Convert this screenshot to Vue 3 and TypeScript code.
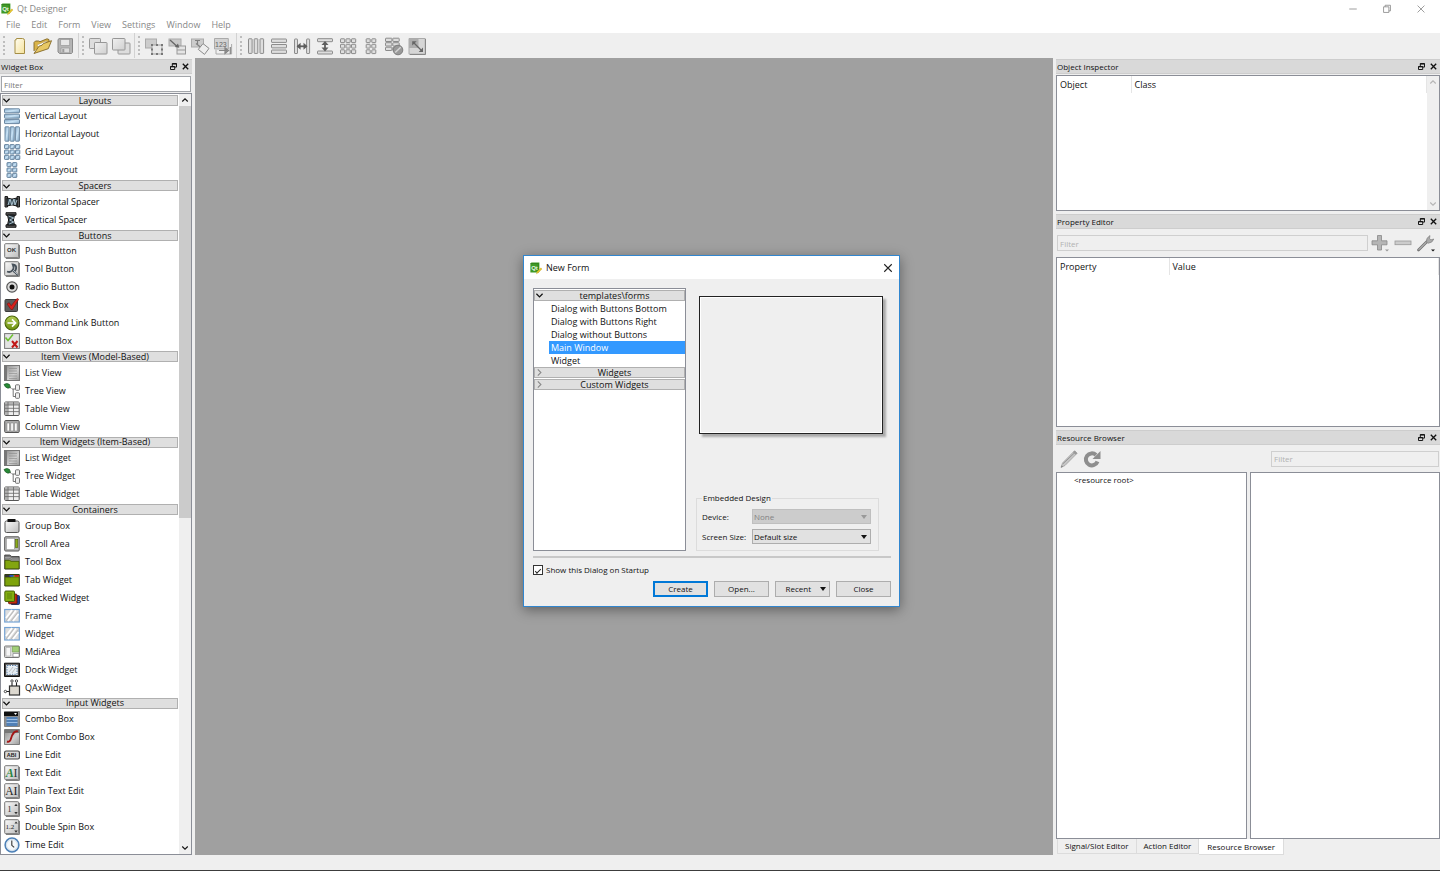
<script setup lang="ts">
import { ref } from 'vue'

interface WidgetGroup {
  title: string
  items: [icon: string, label: string][]
}

const menus = ['File', 'Edit', 'Form', 'View', 'Settings', 'Window', 'Help']

const toolbars: [icon: string, label: string][][] = [
  [['new', 'New'], ['open', 'Open'], ['save', 'Save']],
  [['back', 'Send to Back'], ['front', 'Bring to Front']],
  [['editWidgets', 'Edit Widgets'], ['editSignals', 'Edit Signals/Slots'], ['editBuddies', 'Edit Buddies'], ['editTabs', 'Edit Tab Order']],
  [
    ['tbCols', 'Lay Out Horizontally'], ['tbRows', 'Lay Out Vertically'], ['splitH', 'Horizontal Splitter'], ['splitV', 'Vertical Splitter'],
    ['tbGrid', 'Lay Out in a Grid'], ['tbForm', 'Lay Out in a Form'], ['breakLayout', 'Break Layout'], ['adjust', 'Adjust Size'],
  ],
]
const toolbarWidth = (count: number) => `${9 + Math.round((count * 70) / 3)}px`

const groups: WidgetGroup[] = [
  { title: 'Layouts', items: [['rows', 'Vertical Layout'], ['cols', 'Horizontal Layout'], ['grid', 'Grid Layout'], ['form', 'Form Layout']] },
  { title: 'Spacers', items: [['hspacer', 'Horizontal Spacer'], ['vspacer', 'Vertical Spacer']] },
  {
    title: 'Buttons',
    items: [['push', 'Push Button'], ['tool', 'Tool Button'], ['radio', 'Radio Button'], ['check', 'Check Box'], ['command', 'Command Link Button'], ['buttonBox', 'Button Box']],
  },
  { title: 'Item Views (Model-Based)', items: [['list', 'List View'], ['tree', 'Tree View'], ['table', 'Table View'], ['column', 'Column View']] },
  { title: 'Item Widgets (Item-Based)', items: [['list', 'List Widget'], ['tree', 'Tree Widget'], ['table', 'Table Widget']] },
  {
    title: 'Containers',
    items: [
      ['groupBox', 'Group Box'], ['scrollArea', 'Scroll Area'], ['toolBox', 'Tool Box'], ['tabWidget', 'Tab Widget'], ['stacked', 'Stacked Widget'],
      ['frame', 'Frame'], ['frame', 'Widget'], ['mdi', 'MdiArea'], ['dock', 'Dock Widget'], ['qax', 'QAxWidget'],
    ],
  },
  {
    title: 'Input Widgets',
    items: [
      ['combo', 'Combo Box'], ['fontCombo', 'Font Combo Box'], ['lineEdit', 'Line Edit'], ['textEdit', 'Text Edit'],
      ['plainText', 'Plain Text Edit'], ['spin', 'Spin Box'], ['doubleSpin', 'Double Spin Box'], ['time', 'Time Edit'],
    ],
  },
]

const rects = (xs: number[], ys: number[], w: number, h: number, attrs: string) =>
  ys.flatMap((y) => xs.map((x) => `<rect x="${x}" y="${y}" width="${w}" height="${h}" rx=".5" ${attrs}/>`)).join('')

const blue = 'fill="url(#g-blue)" stroke="#5f7d98" stroke-width=".9"'
const grey = 'fill="#dedede" stroke="#8c8c8c" stroke-width="1"'
const plate = '<rect x=".7" y=".7" width="14" height="14" rx="1" fill="url(#g-plate)" stroke="#777" stroke-width="1"/><path d="M15.4 2v13.4H2" fill="none" stroke="#555" stroke-width=".8"/>'
const serif = 'font-family="Liberation Serif, serif"'
const sans = 'font-family="Liberation Sans, sans-serif"'

const icons: Record<string, string> = {
  new: '<path d="M5.500.5h6a2 2 0 0 1 2 2v13H4V2z" fill="url(#g-page)" stroke="#a58e45" stroke-width="1"/><path d="M5.500.5V2H4z" fill="#fff" stroke="#b09a52" stroke-width=".6"/>',
  open: '<path d="M0 13V4.500L1.500 3h3L6 3.700 13 .8l2 .8V4" fill="#d9b347" stroke="#826827" stroke-width=".9"/><path d="M3 7l9.500-4 .5 1.600-8 5z" fill="#fff" stroke="#a89560" stroke-width=".5"/><path d="M0 15.500L5 8.200l3-1L9.500 5.500 17.500 2.700l-3.200 8z" fill="#e8c864" stroke="#826827" stroke-width=".9"/>',
  save: '<path d="M1 1.500L2 .7h13.500v13.800L14.500 15.500H2.600L1 14z" fill="#b5b5b5" stroke="#8b8b8b"/><rect x="3.700" y="1.500" width="9" height="6" fill="#e6e6e6" stroke="#999" stroke-width=".7"/><path d="M4 10h8.500v4.800H4z" fill="#dcdcdc" stroke="#999" stroke-width=".7"/><path d="M5.300 11h2v3.400h-2z" fill="#9b9b9b"/>',
  back: '<rect x="-.5" y=".5" width="11" height="10" rx=".7" fill="#ddd" stroke="#999"/><rect x="4.500" y="4.500" width="12.500" height="11.500" rx=".7" fill="url(#g-soft)" stroke="#969696"/>',
  front: '<rect x="5" y="5" width="12" height="11" rx=".7" fill="#ddd" stroke="#999"/><rect x="-.5" y=".5" width="12.500" height="11.500" rx=".7" fill="url(#g-soft)" stroke="#969696"/>',
  editWidgets: '<rect x="-.5" y="1" width="11" height="9" fill="#ccc" stroke="#aaa"/><rect x="6" y="7" width="10" height="9" fill="#e8e8e8" stroke="#a2a2a2"/><path d="M5 6h2v2H5zm5 0h2v2h-2zm5 0h2v2h-2zM5 10.500h2v2H5zm10 0h2v2h-2zM5 15h2v2H5zm5 0h2v2h-2zm5 0h2v2h-2z" fill="#777"/>',
  editSignals: '<rect x="0" y="1" width="12" height="7" fill="#c9c9c9" stroke="#aaa"/><rect x="8" y="8" width="8.500" height="8" fill="#e4e4e4" stroke="#999"/><path d="M8 12h8" stroke="#999"/><path d="M1 2l7.200 6.400" stroke="#666" stroke-width="1.300"/><path d="M10.300 9.800L5.800 8.900 9 5.500z" fill="#666"/>',
  editBuddies: '<rect x="-.5" y="1" width="12" height="8" fill="#ccc" stroke="#aaa"/><path d="M3 2.500h5M5.500 2.500V7M4 5.500l5 4" stroke="#808080" stroke-width="1.200" fill="none"/><path d="M11 5.600l6 4.800-4.500 6-6.200-5z" fill="#eee" stroke="#8a8a8a"/>',
  editTabs: '<path d="M-.5 .5h13.800V11H-.5z" fill="#d3d3d3" stroke="#aaa"/><path d="M1 12v4h15.600V6" fill="none" stroke="#aaa"/><text x="0" y="9" font-size="7" fill="#666" ' + sans + '>123</text><path d="M4 12.500h8M10 9.800l3.500 2.700-3.500 3zM15.300 9v7" fill="#999" stroke="#858585" stroke-width="1.200"/>',
  tbCols: rects([0.5, 6.2, 12], [0.8], 3.6, 14.6, grey),
  tbRows: rects([0.5], [1, 6.5, 12], 15, 3.4, grey),
  splitH: rects([0.5, 12.6], [1], 3, 14.5, grey) + '<path d="M3.500 8.300h9" stroke="#5e5e5e" stroke-width="1.800"/><path d="M2.600 8.300l4-3.500v7zM13.500 8.300l-4-3.500v7z" fill="#5e5e5e"/>',
  splitV: rects([0.5], [0.7, 13], 15, 3, grey) + '<path d="M8 4v8" stroke="#5e5e5e" stroke-width="1.800"/><path d="M8 3l-3.500 4h7zM8 13.600L4.500 9.600h7z" fill="#5e5e5e"/>',
  tbGrid: rects([0.5, 6, 11.5], [0.8, 6.3, 11.8], 4.2, 3.8, grey),
  tbForm: rects([3.2, 8.8], [0.8, 6.3, 11.8], 4, 3.8, grey),
  breakLayout: rects([-0.5, 6.8], [0.2, 4.7, 9.2], 6.4, 3.3, grey) + '<circle cx="12" cy="12" r="4.800" fill="#999" stroke="#7d7d7d"/><path d="M9.200 14.500l5.500-5.200" stroke="#d4d4d4" stroke-width="1.500"/>',
  adjust: '<path d="M0 .5h16.200v15.700H0z" fill="#d6d6d6" stroke="#aaa"/><path d="M0 .5h9.500V10H0z" fill="#adadad"/><path d="M16.500 1v15.500H1" fill="none" stroke="#888"/><path d="M5 5l7 7" stroke="#666" stroke-width="1.200"/><path d="M3.200 3.200h4.500L3.200 7.500zM14 14H9.700L14 9.600z" fill="#666"/>',

  rows: rects([0.5], [0.8, 6.2, 11.6], 15, 4, blue),
  cols: rects([1, 6.2, 11.4], [0.8], 4, 14.4, blue),
  grid: rects([0.5, 6, 11.5], [0.6, 6, 11.4], 4.3, 4, blue),
  form: rects([3, 8.6], [0.6, 6, 11.4], 4.2, 4, blue),
  hspacer: '<path d="M1 2.500h2.500V13H1zM13 2.500h2.500V13H13z" fill="#555" stroke="#1d1d1d"/><path d="M3 4q5 2.200 10 0v8q-5-2.200-10 0z" fill="#40545f" stroke="#111"/><path d="M4 11l2-6 1.800 6L10 5l1 6 2-5" fill="none" stroke="#b6ccd8" stroke-width=".9"/>',
  vspacer: '<path d="M2 .7h10v2.500H2zM2 12.800h10v2.500H2z" fill="#555" stroke="#1d1d1d"/><path d="M3.500 3q2.200 5 0 10h7q-2.200-5 0-10z" fill="#2c3a42" stroke="#111"/><path d="M4.500 4l5.200 2-4 2 4 2-4.500 2" fill="none" stroke="#b6ccd8" stroke-width=".9"/>',
  push: plate + '<text x="7.600" y="9" font-size="6" font-weight="bold" text-anchor="middle" fill="#333" ' + sans + '>OK</text>',
  tool: plate + '<path d="M14 14.500L8.500 8.700M3 10.500q3.500 1.500 5.500-1.200T8.800 3.500q3.400.3 3.400 3.200T9.300 11" fill="none" stroke="#48525c" stroke-width="1.800"/><path d="M13.500 13.500L9 9" stroke="#c5ced6" stroke-width=".8"/>',
  radio: '<circle cx="8" cy="8" r="5.200" fill="#ddd" stroke="#555" stroke-width="1.200"/><circle cx="8" cy="8" r="2.500" fill="#111"/>',
  check: '<rect x="1" y="2.500" width="12.500" height="12" rx="1" fill="#5d5d5d" stroke="#3c3c3c"/><path d="M3 7l2.200-1.300 2 3L13 1.500l1.700.8-6.200 10.200H7z" fill="#d8211c" stroke="#7e0f0c" stroke-width=".6"/>',
  command: '<circle cx="8" cy="8" r="7" fill="url(#g-green)" stroke="#4a6608" stroke-width="1.100"/><path d="M3.500 8h7.500M8 4.300L11.600 8 8 11.700" fill="none" stroke="#fff" stroke-width="1.700"/>',
  buttonBox: '<rect x=".6" y=".6" width="14.800" height="14.800" fill="#e3e3e3" stroke="#777"/><path d="M1.500 4.500L4 7.500l5-6" fill="none" stroke="#6cc030" stroke-width="1.500"/><path d="M8 8l5.500 6.500M13.500 8L8 14.500" stroke="#c01818" stroke-width="2"/>',
  list: '<rect x=".5" y=".5" width="15" height="15" fill="url(#g-list)" stroke="#777"/><path d="M.5.500H3v15H.5z" fill="#777"/><path d="M5 3.500h8M5 6h8M5 8.500h8M5 11h8M5 13.500h8" stroke="#888" stroke-width=".6"/>',
  tree: '<path d="M0 1.500q3-2 5.500 0l1 3q-3 1.500-5-.5z" fill="#278a35" stroke="#175421" stroke-width=".7"/><path d="M5.500 4l2 1.500M8 6h3.500M9.200 6v7.500h2.500" fill="none" stroke="#666" stroke-width=".9"/><rect x="11.500" y="1.800" width="4" height="5.500" rx=".8" fill="#eee" stroke="#666" stroke-width=".9"/><rect x="11.500" y="9.800" width="4" height="5.500" rx=".8" fill="#eee" stroke="#666" stroke-width=".9"/>',
  table: '<rect x=".7" y="1" width="14.500" height="13.500" rx="1" fill="#eee" stroke="#555"/><path d="M1 1.300h14v2.500H1zM1 1h2.500v13H1z" fill="#b2b2b2"/><path d="M1 4h14M1 7.300h14M1 10.600h14M4 1v13M9.500 1v13" stroke="#666" stroke-width=".8"/>',
  column: '<rect x=".7" y="1.500" width="14.500" height="12" rx="1" fill="#aaa" stroke="#555"/><path d="M3 4h2.500v8H3zM6.800 4h2.500v8H6.800zM10.600 4h2.500v8h-2.500z" fill="#fff" stroke="#777" stroke-width=".5"/>',
  groupBox: '<rect x="1" y="3" width="14" height="11.500" rx="1.500" fill="url(#g-plate)" stroke="#555"/><path d="M3.500 1h8v3h-8z" fill="#111"/>',
  scrollArea: '<rect x=".7" y=".8" width="14.500" height="14.200" rx="1" fill="#bbb" stroke="#555"/><rect x="2.500" y="2.500" width="7.800" height="11" fill="#fff" stroke="#888" stroke-width=".5"/><rect x="11.600" y="3.500" width="2.200" height="8" fill="#8cab19" stroke="#4c6400" stroke-width=".6"/>',
  toolBox: '<path d="M.7 1h5l2 1.500h7.500V15H.7z" fill="#777" stroke="#333" stroke-width=".8"/><path d="M1 3.500h5L8 5h7M1 5h4l2 1.300h8" fill="none" stroke="#bbb" stroke-width=".6"/><path d="M1 6.300h4.500l1.500 1h8v7.500H1z" fill="#83a610" stroke="#435900" stroke-width=".8"/>',
  tabWidget: '<path d="M.8 2.500h14.500V14H.8z" fill="#7da30b" stroke="#31420a"/><path d="M1 2.700h6v2.600H1z" fill="#333"/><path d="M5.500 3h4v1.800h-4z" fill="#2452bc"/><path d="M10.500 3h4.500v1.800h-4.500z" fill="#c42020"/><path d="M1 5.600h14" stroke="#536e04" stroke-width=".6"/>',
  stacked: '<rect x="7" y="5.500" width="8.500" height="9" rx="1" fill="#1d3f9e" stroke="#101f52" stroke-width=".8"/><rect x="4.500" y="4" width="8.500" height="9.800" rx="1" fill="#c12a11" stroke="#591003" stroke-width=".8"/><rect x=".8" y="1" width="9.700" height="10.500" rx="1" fill="#83ad11" stroke="#3d5600" stroke-width=".9"/><path d="M3 4h5M3 6h5M3 8h5" stroke="#4f7005" stroke-width=".7"/>',
  frame: '<rect x=".7" y="1.500" width="14.600" height="12.500" fill="#dedede" stroke="#75a3d4" stroke-width="1.200"/><path d="M2 10l6-8M4 13l8-10.500M9 13l5.500-7" stroke="#fff" stroke-width="1.800"/><path d="M2 13l8-10.500M7 13l7.500-9.500" stroke="#bbb" stroke-width="1.200"/>',
  mdi: '<rect x=".6" y="2" width="14.800" height="11.500" rx=".8" fill="#ddd" stroke="#777"/><path d="M2 3.500h4.500V12H2z" fill="#f6f6f6" stroke="#999" stroke-width=".5"/><path d="M8.300 2.500H15V8H8.300z" fill="#a2ce78" stroke="#6b9349" stroke-width=".6"/><path d="M9 9.500h6V13H9z" fill="#fff" stroke="#777" stroke-width=".6"/>',
  dock: '<path d="M.5 1.200h15v13.300H.5z" fill="#444" stroke="#111"/><rect x="3" y="3.500" width="10" height="8.800" fill="#e4edf4" stroke="#fff" stroke-width="1.500"/><rect x="3" y="3.500" width="10" height="8.800" fill="none" stroke="#557da8" stroke-width="1" stroke-dasharray="1.500 1"/><path d="M5 10l4-5M8 11l3.500-5" stroke="#c0c0c0"/>',
  qax: '<rect x="5.500" y="6" width="10" height="9" fill="#ddd9d0" stroke="#333" stroke-width="1.200"/><path d="M8 6V2.500M12.500 6V2.500M5.500 11.500H2" stroke="#222" stroke-width="1.100"/><circle cx="8" cy="1" r="1.200" fill="#fff" stroke="#222" stroke-width=".8"/><circle cx="12.500" cy="1" r="1.200" fill="#fff" stroke="#222" stroke-width=".8"/><circle cx="1.400" cy="11.500" r="1.200" fill="#fff" stroke="#222" stroke-width=".8"/>',
  combo: '<path d="M.5.500h15v15H.5z" fill="#8e8e8e" stroke="#666" stroke-width=".7"/><path d="M0 1h14v4H0z" fill="#111"/><path d="M10 2h3l-1.500 2z" fill="#fff"/><path d="M2.500 6h11v9h-11z" fill="#5180b6"/><path d="M2.500 8.500h11M2.500 11.500h11" stroke="#a4c5ea" stroke-width=".9"/>',
  fontCombo: '<path d="M.5.500h15v15H.5z" fill="url(#g-list)" stroke="#666" stroke-width=".8"/><path d="M1 1h14v3H1z" fill="#777"/><path d="M3 12.500q3 1 4-3t3-6 4-1" fill="none" stroke="#a31515" stroke-width="1.900"/>',
  lineEdit: '<rect x=".6" y="4" width="14.800" height="8" rx="1.500" fill="#d8d8d8" stroke="#444" stroke-width="1.200"/><text x="7.500" y="10.200" font-size="5.500" font-weight="bold" text-anchor="middle" fill="#222" ' + sans + '>ABI</text>',
  textEdit: plate + '<text x="1.800" y="12" font-size="12" font-style="italic" font-weight="bold" fill="#29853f" ' + serif + '>A</text><text x="9.500" y="12" font-size="12" fill="#333" ' + serif + '>I</text>',
  plainText: plate + '<text x="1.300" y="12" font-size="11.500" fill="#222" ' + serif + '>A</text><text x="9.500" y="12" font-size="12" fill="#222" ' + serif + '>I</text>',
  spin: plate + '<text x="3.600" y="10.500" font-size="8" fill="#222" ' + serif + '>1</text><path d="M10.300 5L12 2.800 13.700 5zM10.300 11l1.700 2.200 1.700-2.200z" fill="#333"/>',
  doubleSpin: plate + '<text x="1.500" y="10" font-size="7" fill="#222" ' + serif + '>1.2</text><path d="M10.500 4.500L12 2.500l1.700 2zM10.300 11.500l1.700 2.200 1.700-2.200z" fill="#333"/>',
  time: '<circle cx="8" cy="8" r="6.900" fill="#f4f8fb" stroke="#4d80b7" stroke-width="1.500"/><circle cx="8" cy="8" r="5.500" fill="none" stroke="#c2d3e2" stroke-width=".7"/><path d="M7.800 3.500V8.300l2.400 2" fill="none" stroke="#333" stroke-width="1.100"/>',

  qt: '<path d="M.5 2L2 .5h10.500v12L11 14H.5z" fill="#3f9a26"/><path d="M.5 2H11v12" fill="none" stroke="#2e751a" stroke-width=".8"/><text x="1.500" y="10.500" font-size="8" font-weight="bold" fill="#e9f6e4" ' + sans + '>Qt</text><path d="M8.500 15.800l1-3 5-5 1.500 1.600-5 5z" fill="#eac62b" stroke="#b79a21" stroke-width=".4"/>',
  float: '<path d="M5.500 2.500h7v6h-7zM5 3.500h8" fill="none" stroke="#111" stroke-width="1.600"/><path d="M2.500 7.500h7v5h-7z" fill="#e0e0e0" stroke="#111" stroke-width="1.600"/><path d="M2.500 8h7" stroke="#111" stroke-width="1.800"/>',
  cross: '<path d="M3 3l9 9M12 3l-9 9" stroke="#111" stroke-width="2.200"/>',
  minimize: '<path d="M2 8h12" stroke="#888" stroke-width="1.300"/>',
  restore: '<path d="M2.500 4.500h8.500v9H2.500zM5 4.500V2h8.500v9H11" fill="none" stroke="#888" stroke-width="1.300"/>',
  close: '<path d="M2.500 2.500l11 11M13.500 2.500l-11 11" stroke="#888" stroke-width="1.300"/>',
  closeDark: '<path d="M2 2l12 12M14 2L2 14" stroke="#222" stroke-width="1.700"/>',
  down: '<path d="M2.500 5l5.500 5.500L13.500 5" fill="none" stroke="currentColor" stroke-width="2.200"/>',
  up: '<path d="M2.500 11L8 5.500l5.500 5.500" fill="none" stroke="currentColor" stroke-width="2.200"/>',
  right: '<path d="M5 2.500L10.500 8 5 13.500" fill="none" stroke="currentColor" stroke-width="1.900"/>',
  plus: '<path d="M5.500.500h4v5.300H15v4H9.500V15h-4V9.800H0v-4h5.500z" fill="#b5b5b5" stroke="#888" stroke-width=".8"/><path d="M13 14.500h4L15 16.500z" fill="#999"/>',
  minus: '<rect x="0" y="6" width="16" height="3.700" fill="#ccc" stroke="#999" stroke-width=".8"/>',
  wrench: '<path d="M.5 15L9 6.500" stroke="#777" stroke-width="2.800" stroke-linecap="round"/><path d="M1 14.500L9 6.500" stroke="#d2d2d2" stroke-width="1" stroke-linecap="round"/><path d="M8.500 7.500Q7.500 3 12 .5L11.500 3.500 13 4.800 15.800 4Q14.500 8 10.300 8.200z" fill="#aaa" stroke="#777" stroke-width=".6"/><path d="M13 14.500h4L15 16.500z" fill="#111"/>',
  pencil: '<path d="M0 16.500l1.500-4.500L13.500-.2 16.200 2.200 4 14.500z" fill="#c5c5c5" stroke="#999" stroke-width=".7"/><path d="M2 12.700L14.700.8" stroke="#888" stroke-width=".8"/><path d="M13.500-.2L16.200 2.200l-1.500 1.500L12 1.300z" fill="#999"/><path d="M0 16.500l.7-2 1.300 1z" fill="#777"/>',
  reload: '<path d="M13.500 10.500A6 6 0 1 1 12 4" fill="none" stroke="#8e8e8e" stroke-width="4"/><path d="M16.500 0v8H8.500z" fill="#8e8e8e"/>',
}

const forms = ['Dialog with Buttons Bottom', 'Dialog with Buttons Right', 'Dialog without Buttons', 'Main Window', 'Widget']
const selectedForm = ref('Main Window')
const showOnStartup = ref(true)
const screenSize = ref('Default size')
const tabs = ['Signal/Slot Editor', 'Action Editor', 'Resource Browser']
const activeTab = ref('Resource Browser')
</script>

<template>
  <div class="window">
    <svg class="defs" aria-hidden="true">
      <defs>
        <linearGradient id="g-blue" x1="0" y1="0" x2="1" y2="1"><stop offset="0" stop-color="#86a9c6" /><stop offset=".5" stop-color="#c8e2f5" /><stop offset="1" stop-color="#7fa3c1" /></linearGradient>
        <linearGradient id="g-plate" x1="0" y1="0" x2="1" y2="1"><stop offset="0" stop-color="#fafafa" /><stop offset="1" stop-color="#bcbcbc" /></linearGradient>
        <linearGradient id="g-soft" x1="0" y1="0" x2="1" y2="1"><stop offset="0" stop-color="#f0f0f0" /><stop offset="1" stop-color="#d0d0d0" /></linearGradient>
        <linearGradient id="g-page" x1="0" y1="0" x2="1" y2="1"><stop offset="0" stop-color="#fffdf2" /><stop offset="1" stop-color="#f5e29b" /></linearGradient>
        <linearGradient id="g-list" x1="0" y1="0" x2="1" y2="1"><stop offset="0" stop-color="#8c8c8c" /><stop offset=".6" stop-color="#cfcfcf" /><stop offset="1" stop-color="#999" /></linearGradient>
        <linearGradient id="g-green" x1="0" y1="0" x2="0" y2="1"><stop offset="0" stop-color="#b3cc55" /><stop offset="1" stop-color="#6b8f0e" /></linearGradient>
      </defs>
    </svg>

    <header class="titlebar">
      <svg class="ico-title" viewBox="0 0 16 16" v-html="icons.qt" />
      <span class="title">Qt Designer</span>
      <div class="controls">
        <button v-for="name in ['minimize', 'restore', 'close']" :key="name" :aria-label="name">
          <svg viewBox="0 0 16 16" v-html="icons[name]" />
        </button>
      </div>
    </header>
    <nav class="menubar">
      <button v-for="m in menus" :key="m">{{ m }}</button>
    </nav>
    <div class="toolbars">
      <div v-for="(bar, i) in toolbars" :key="i" class="toolbar" role="toolbar" :style="{ width: toolbarWidth(bar.length) }">
        <button v-for="[icon, label] in bar" :key="icon" :aria-label="label" :disabled="i > 0 || icon === 'save'">
          <svg viewBox="-1 -1 18 18" v-html="icons[icon]" />
        </button>
      </div>
    </div>

    <main class="workspace">
      <aside class="dock widget-box">
        <div class="dock-title">
          <h2>Widget Box</h2>
          <button aria-label="Float"><svg viewBox="0 0 15 15" v-html="icons.float" /></button>
          <button aria-label="Close panel"><svg viewBox="0 0 15 15" v-html="icons.cross" /></button>
        </div>
        <input class="filter" type="text" placeholder="Filter" aria-label="Filter widgets" />
        <div class="tree-frame">
          <div class="tree">
            <template v-for="g in groups" :key="g.title">
              <button class="group-head"><svg viewBox="0 0 16 16" v-html="icons.down" /><span>{{ g.title }}</span></button>
              <div v-for="[icon, label] in g.items" :key="label" class="tree-item">
                <svg viewBox="0 0 16 16" v-html="icons[icon]" /><span>{{ label }}</span>
              </div>
            </template>
          </div>
          <div class="scrollbar">
            <button aria-label="Scroll up"><svg viewBox="0 0 16 16" v-html="icons.up" /></button>
            <div class="track"><div class="thumb"></div></div>
            <button aria-label="Scroll down"><svg viewBox="0 0 16 16" v-html="icons.down" /></button>
          </div>
        </div>
      </aside>

      <section class="canvas" aria-label="Form area"></section>

      <aside class="right">
        <section class="dock">
          <div class="dock-title">
            <h2>Object Inspector</h2>
            <button aria-label="Float"><svg viewBox="0 0 15 15" v-html="icons.float" /></button>
            <button aria-label="Close panel"><svg viewBox="0 0 15 15" v-html="icons.cross" /></button>
          </div>
          <div class="pane inspector">
            <table>
              <thead><tr><th class="c-object">Object</th><th>Class</th></tr></thead>
            </table>
            <div class="scrollbar idle">
              <button aria-label="Scroll up" disabled><svg viewBox="0 0 16 16" v-html="icons.up" /></button>
              <div class="track"></div>
              <button aria-label="Scroll down" disabled><svg viewBox="0 0 16 16" v-html="icons.down" /></button>
            </div>
          </div>
        </section>

        <section class="dock">
          <div class="dock-title">
            <h2>Property Editor</h2>
            <button aria-label="Float"><svg viewBox="0 0 15 15" v-html="icons.float" /></button>
            <button aria-label="Close panel"><svg viewBox="0 0 15 15" v-html="icons.cross" /></button>
          </div>
          <div class="panel-tools">
            <input class="off" type="text" placeholder="Filter" aria-label="Filter properties" disabled />
            <button aria-label="Add property" disabled><svg viewBox="-1 -1 18 18" v-html="icons.plus" /></button>
            <button aria-label="Remove property" disabled><svg viewBox="-1 -1 18 18" v-html="icons.minus" /></button>
            <button aria-label="Configure"><svg viewBox="-1 -1 18 18" v-html="icons.wrench" /></button>
          </div>
          <div class="pane">
            <table>
              <thead><tr><th class="c-property">Property</th><th>Value</th></tr></thead>
            </table>
          </div>
        </section>

        <section class="dock">
          <div class="dock-title">
            <h2>Resource Browser</h2>
            <button aria-label="Float"><svg viewBox="0 0 15 15" v-html="icons.float" /></button>
            <button aria-label="Close panel"><svg viewBox="0 0 15 15" v-html="icons.cross" /></button>
          </div>
          <div class="panel-tools resource-tools">
            <button aria-label="Edit resources" disabled><svg viewBox="-1 -1 18 18" v-html="icons.pencil" /></button>
            <button aria-label="Reload" disabled><svg viewBox="-1 -1 18 18" v-html="icons.reload" /></button>
            <input class="off" type="text" placeholder="Filter" aria-label="Filter resources" disabled />
          </div>
          <div class="split">
            <div class="pane"><div class="resource-root">&lt;resource root&gt;</div></div>
            <div class="pane"></div>
          </div>
          <div class="tabs" role="tablist">
            <button v-for="t in tabs" :key="t" role="tab" :aria-selected="t === activeTab" :class="{ active: t === activeTab }" @click="activeTab = t">{{ t }}</button>
          </div>
        </section>
      </aside>
    </main>
    <footer class="statusbar"></footer>

    <div class="dialog" role="dialog" aria-label="New Form">
      <div class="dialog-title">
        <svg class="ico-title" viewBox="0 0 16 16" v-html="icons.qt" />
        <span class="title">New Form</span>
        <button aria-label="Close dialog"><svg viewBox="0 0 16 16" v-html="icons.closeDark" /></button>
      </div>
      <div class="dialog-body">
        <div class="choices">
          <div class="templates">
            <button class="group-head"><svg viewBox="0 0 16 16" v-html="icons.down" /><span>templates\forms</span></button>
            <button v-for="f in forms" :key="f" class="template" :class="{ selected: f === selectedForm }" @click="selectedForm = f">{{ f }}</button>
            <button class="group-head folded"><svg viewBox="0 0 16 16" v-html="icons.right" /><span>Widgets</span></button>
            <button class="group-head folded"><svg viewBox="0 0 16 16" v-html="icons.right" /><span>Custom Widgets</span></button>
          </div>
          <div class="side">
            <div class="preview"></div>
            <fieldset>
              <legend>Embedded Design</legend>
              <label for="device">Device:</label>
              <div class="select"><select id="device" disabled><option>None</option></select></div>
              <label for="screen">Screen Size:</label>
              <div class="select"><select id="screen" v-model="screenSize"><option>Default size</option></select></div>
            </fieldset>
          </div>
        </div>
        <hr />
        <label class="startup"><input v-model="showOnStartup" type="checkbox" />Show this Dialog on Startup</label>
        <div class="actions">
          <button class="default">Create</button>
          <button>Open...</button>
          <button class="with-menu">Recent</button>
          <button>Close</button>
        </div>
      </div>
    </div>
  </div>
</template>

<style>
body {
  margin: 0;
}
</style>

<style scoped>
.window {
  position: relative;
  display: flex;
  flex-direction: column;
  box-sizing: border-box;
  min-height: 100vh;
  background: #efefef;
  border-bottom: 1px solid #3c3c3c;
  color: #111;
  font: 9px/12px 'Open Sans', 'Noto Sans', sans-serif;
}
.window *,
.window *::before,
.window *::after {
  box-sizing: border-box;
}
.defs {
  position: absolute;
  width: 0;
  height: 0;
}
button {
  display: flex;
  align-items: center;
  justify-content: center;
  padding: 0;
  border: 0;
  background: none;
  color: inherit;
  font: inherit;
  white-space: nowrap;
}
input,
select {
  color: inherit;
  font: inherit;
}
svg {
  display: block;
  flex: none;
  overflow: visible;
}
.dock-title,
.filter,
.panel-tools,
.resource-root,
.tabs,
fieldset,
.startup,
.actions {
  font-size: 8px;
}

.titlebar {
  display: flex;
  align-items: center;
  height: 17px;
  background: #fff;
  color: #888;
}
.ico-title {
  width: 12px;
  height: 12px;
}
.titlebar .ico-title {
  margin-left: 1px;
}
.title {
  flex: 1;
  margin-left: 4px;
}
.controls {
  display: flex;
  margin-right: 2px;
}
.controls button {
  width: 34px;
  height: 15px;
}
.controls button svg {
  width: 10px;
  height: 10px;
}
.menubar {
  display: flex;
  gap: 11px;
  height: 16px;
  padding-left: 6px;
  background: #fff;
  color: #888;
}
.toolbars {
  display: flex;
  height: 25px;
}
.toolbar {
  display: flex;
  padding: 1px 1px 1px 3px;
  border-right: 1px solid #d2d2d2;
}
.toolbar:last-child {
  padding-right: 4px;
  border-right: 0;
}
.toolbar::before {
  content: '';
  width: 4px;
  margin: 2px 0;
  border-left: 2px dotted #bdbdbd;
}
.toolbar button {
  flex: 1;
}
.toolbar svg {
  width: 18px;
  height: 18px;
}

.workspace {
  display: grid;
  flex: 1;
  grid-template-columns: 192px minmax(0, 1fr) 384px;
  gap: 3px;
}
.canvas {
  background: #a0a0a0;
}
.dock {
  display: flex;
  flex-direction: column;
  min-height: 0;
}
.dock-title {
  display: flex;
  flex: none;
  align-items: center;
  height: 15px;
  padding-right: 1px;
  background: #d9d9d9;
  border: 1px solid #cdcdcd;
  border-width: 1px 0;
}
.dock-title h2 {
  flex: 1;
  margin: 0 0 0 1px;
  font: inherit;
}
.dock-title button {
  width: 12px;
  height: 12px;
}
.dock-title svg {
  width: 9px;
  height: 9px;
}
.widget-box {
  padding-top: 1px;
}
.filter {
  height: 16px;
  margin: 2px 1px 1px;
  padding: 0 2px;
  border: 1px solid #a2a5aa;
  background: #fff;
}
input::placeholder {
  color: #777;
  opacity: 1;
}
.tree-frame {
  display: flex;
  flex: 1;
  border: 1px solid #8b8e97;
  background: #fff;
}
.tree {
  display: flex;
  flex: 1;
  flex-direction: column;
}
.group-head {
  position: relative;
  margin: 0 1px;
}
.tree .group-head {
  flex: 1 0 13px;
  max-height: 14px;
  background: linear-gradient(#dfdfdf, #dfdfdf) 1px 2px / calc(100% - 2px) 9px no-repeat, linear-gradient(#b0b0b0, #b0b0b0) 0 1px / 100% 11px no-repeat;
}
.group-head span {
  flex: 1;
  padding-left: 10px;
}
.group-head svg {
  position: absolute;
  left: 0;
  width: 9px;
  height: 9px;
}
.tree-item {
  display: flex;
  flex: none;
  align-items: center;
  gap: 5px;
  height: 18px;
  padding-left: 3px;
}
.tree-item svg {
  width: 16px;
  height: 16px;
}
.scrollbar {
  display: flex;
  flex: none;
  flex-direction: column;
  width: 12px;
  background: #efefef;
}
.scrollbar button {
  height: 12px;
}
.scrollbar svg {
  width: 8px;
  height: 8px;
}
.scrollbar .track {
  flex: 1;
}
.thumb {
  height: 56%;
  background: #cbcbcb;
}
.scrollbar.idle {
  color: #b4b4b4;
}

.right {
  display: grid;
  grid-template-rows: minmax(0, 152fr) minmax(0, 213fr) minmax(0, 425fr);
  gap: 3px;
  padding-top: 1px;
}
.pane {
  flex: 1;
  min-width: 0;
  border: 1px solid #8b8e97;
  background: #fff;
}
.inspector {
  display: flex;
  margin-top: 1px;
}
table {
  width: 100%;
  border-collapse: collapse;
}
.inspector table {
  flex: 1;
  align-self: flex-start;
}
th {
  height: 17px;
  padding: 0 3px;
  border-right: 1px solid #e5e5e5;
  font-weight: normal;
  text-align: left;
}
.c-object {
  width: 74px;
}
.c-property {
  width: 112px;
}
.panel-tools {
  display: flex;
  flex: none;
  align-items: center;
  height: 28px;
  padding: 0 3px 0 1px;
}
.panel-tools .off {
  flex: 1;
  height: 16px;
  padding: 0 2px;
  border: 1px solid #cfcfcf;
  background: #efefef;
}
.off::placeholder {
  color: #b2b2b2;
}
.panel-tools button {
  width: 23px;
  height: 23px;
}
.panel-tools svg {
  width: 18px;
  height: 18px;
}
.panel-tools.resource-tools {
  height: 27px;
  padding: 0 1px;
}
.resource-tools .off {
  flex: 0 0 168px;
  margin-left: auto;
}
.split {
  display: flex;
  flex: 1;
  gap: 3px;
}
.resource-root {
  padding: 1px 0 0 17px;
}
.tabs {
  display: flex;
  flex: none;
  align-items: flex-start;
  height: 16px;
  padding-left: 1px;
}
.tabs button {
  height: 15px;
  padding: 0 7px;
  border: 1px solid #dcdcdc;
  border-top: 0;
}
.tabs button + button {
  border-left: 0;
}
.tabs button.active {
  height: 16px;
  padding: 0 8px;
  background: #fff;
}
.statusbar {
  height: 15px;
}

.dialog {
  position: absolute;
  top: 255px;
  left: 523px;
  display: flex;
  flex-direction: column;
  width: 377px;
  border: 1px solid #3186cf;
  background: #efefef;
  box-shadow: 0 3px 12px rgba(0, 0, 0, 0.4);
}
.dialog-title {
  display: flex;
  align-items: center;
  height: 23px;
  padding: 0 5px 0 6px;
  background: #fff;
}
.dialog-title button {
  width: 12px;
  height: 12px;
}
.dialog-title button svg {
  width: 10px;
  height: 10px;
}
.dialog-body {
  padding: 9px 8px 9px 9px;
}
.choices {
  display: flex;
  gap: 10px;
}
.templates {
  width: 153px;
  height: 263px;
  border: 1px solid #8b8e97;
  background: #fff;
}
.templates .group-head {
  width: 151px;
  height: 11px;
  margin: 0 0 1px;
  border: 1px solid #b0b0b0;
  background: #dfdfdf;
}
.templates .group-head:first-child {
  margin-top: 1px;
}
.folded svg {
  color: #888;
}
.template {
  justify-content: flex-start;
  width: 136px;
  height: 13px;
  margin-left: 15px;
  padding-left: 2px;
}
.template.selected {
  background: #3399ff;
  color: #fff;
}
.side {
  display: flex;
  flex: 1;
  flex-direction: column;
  justify-content: space-between;
}
.preview {
  width: 184px;
  height: 138px;
  margin: 8px 0 0 3px;
  border: 1px solid #222;
  box-shadow: inset 0 0 0 1px #fff, 3px 3px 2px #aaa;
}
fieldset {
  display: grid;
  grid-template-columns: 50px 119px;
  row-gap: 5px;
  width: 183px;
  margin: 0;
  padding: 5px 5px 6px;
  border: 1px solid #dcdcdc;
}
legend {
  padding: 0 1px;
}
fieldset label {
  line-height: 15px;
  white-space: nowrap;
}
.select {
  position: relative;
}
.select::after,
.with-menu::after {
  content: '';
  border: 3px solid transparent;
  border-top: 4px solid #111;
  border-bottom: 0;
}
.select::after {
  position: absolute;
  top: 6px;
  right: 4px;
  pointer-events: none;
}
.select:has(select:disabled)::after {
  border-top-color: #999;
}
select {
  display: block;
  width: 100%;
  height: 15px;
  padding: 0 1px;
  border: 1px solid #adadad;
  border-radius: 0;
  background: #e1e1e1;
  appearance: none;
}
select:disabled {
  border-color: #bfbfbf;
  background: #cccccc;
  color: #838383;
  opacity: 1;
}
hr {
  height: 2px;
  margin: 5px 0 6px;
  border: 0;
  background: #c8c8c8;
}
.startup {
  display: flex;
  align-items: center;
  gap: 3px;
  height: 12px;
}
.startup input {
  display: grid;
  place-items: center;
  width: 10px;
  height: 10px;
  margin: 0;
  border: 1px solid #333;
  background: #fff;
  appearance: none;
}
.startup input:checked::before {
  content: '';
  width: 6px;
  height: 3px;
  border: solid #222;
  border-width: 0 0 1px 1px;
  rotate: -45deg;
}
.actions {
  display: flex;
  justify-content: flex-end;
  gap: 6px;
  margin-top: 5px;
}
.actions button {
  width: 55px;
  height: 16px;
  border: 1px solid #adadad;
  background: #e1e1e1;
}
.actions .default {
  border: 2px solid #0078d7;
}
.actions .with-menu {
  gap: 9px;
  justify-content: flex-end;
  padding-right: 3px;
}
</style>
